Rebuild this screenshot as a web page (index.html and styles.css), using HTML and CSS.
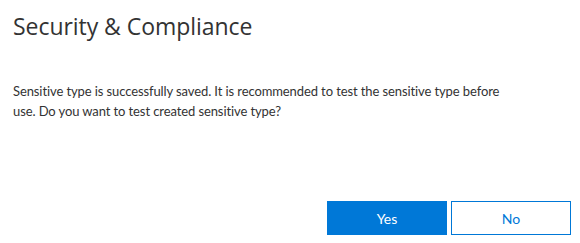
FILE: index.html
```html
<!DOCTYPE html>
<html>
<head>
<meta charset="utf-8">
<link rel="stylesheet" href="styles.css">
</head>
<body>
<div class="dialog">
  <h1 class="title">Security &amp; Compliance</h1>
  <p class="message">Sensitive type is successfully saved. It is recommended to test the sensitive type before use. Do you want to test created sensitive type?</p>
  <div class="actions">
    <button class="btn btn-primary">Yes</button>
    <button class="btn btn-secondary">No</button>
  </div>
</div>
</body>
</html>
```
FILE: styles.css
```css
html, body {
  margin: 0;
  padding: 0;
  background: #ffffff;
}
.dialog {
  width: 580px;
  height: 243px;
  box-sizing: border-box;
  padding: 11px 9px 8px 13px;
  display: flex;
  flex-direction: column;
  font-family: "Open Sans", "Noto Sans", sans-serif;
  color: #333333;
}
.title {
  margin: 0;
  font-size: 23px;
  font-weight: 400;
  line-height: 30px;
  color: #333333;
  letter-spacing: -0.05px;
}
.message {
  margin: 40px 0 0 0;
  font-family: "Lato", "Open Sans", sans-serif;
  font-size: 13px;
  letter-spacing: -0.1px;
  line-height: 20px;
  color: #333333;
  max-width: 500px;
}
.actions {
  margin-top: auto;
  display: flex;
  justify-content: flex-end;
  gap: 4px;
}
.btn {
  width: 120px;
  height: 34px;
  box-sizing: border-box;
  font-family: "Lato", "Open Sans", sans-serif;
  font-size: 14px;
  cursor: pointer;
  border-radius: 0;
}
.btn-primary {
  background: #0078d7;
  border: 1px solid #0078d7;
  color: #ffffff;
}
.btn-secondary {
  background: #ffffff;
  border: 1px solid #0078d7;
  color: #0078d7;
}
```
